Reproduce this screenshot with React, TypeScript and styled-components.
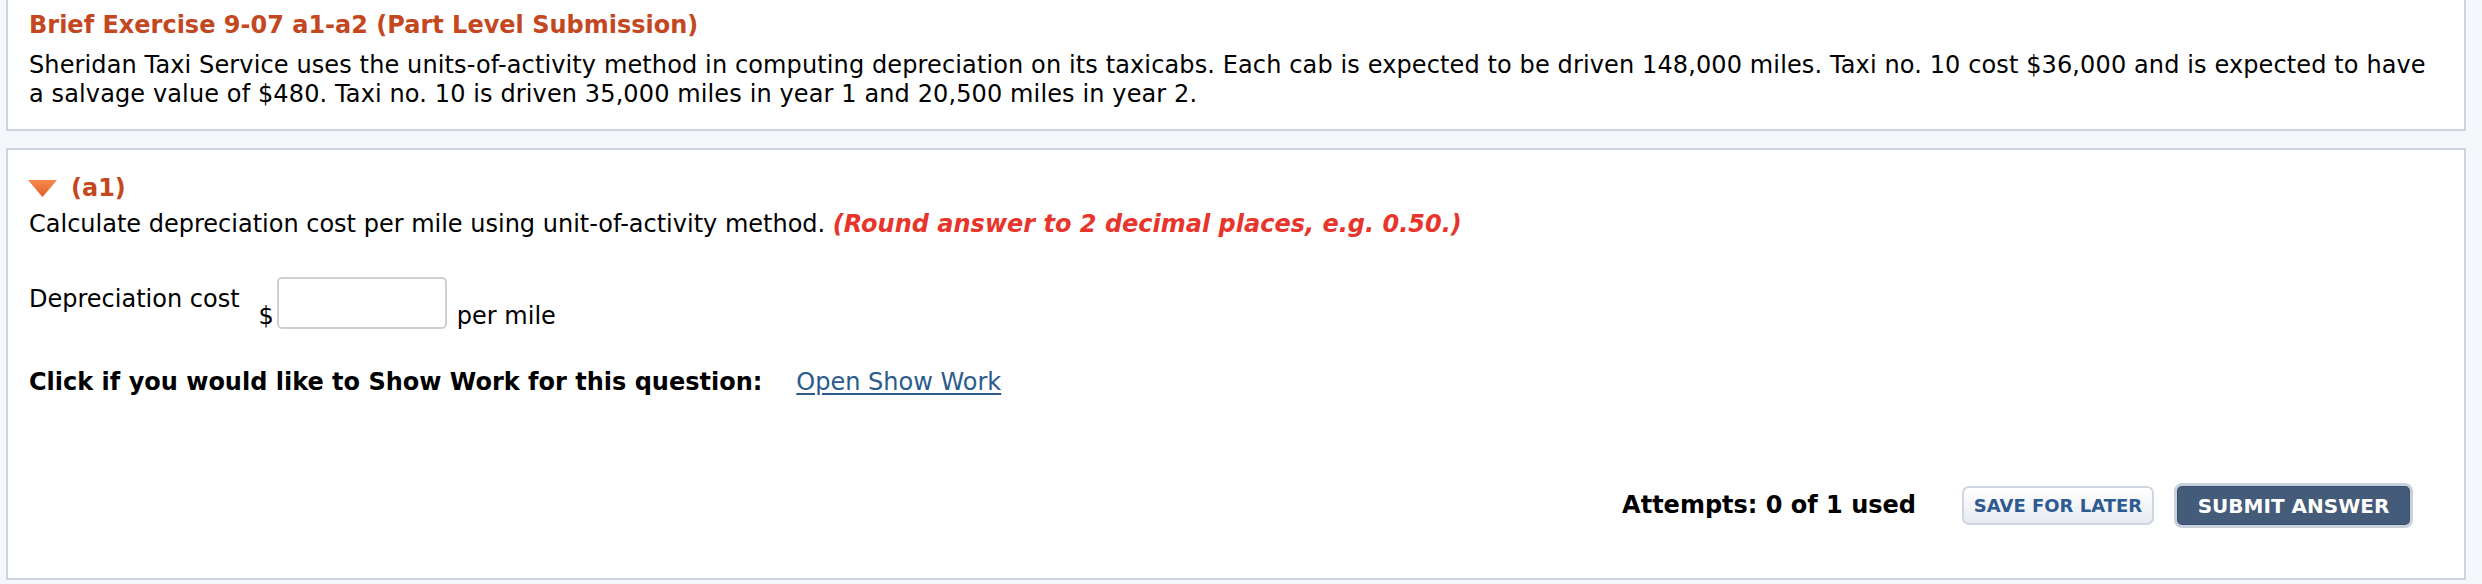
import React from "react";
import styled, { createGlobalStyle } from "styled-components";

const GlobalStyle = createGlobalStyle`
  html, body {
    margin: 0;
    padding: 0;
    background: #f5f7fa;
  }
  body {
    font-family: Verdana, "DejaVu Sans", sans-serif;
    font-size: 24px;
    line-height: 29px;
    color: #000;
  }
  * { box-sizing: border-box; }
`;

const Page = styled.div`
  display: flex;
  flex-direction: column;
  gap: 17px;
  margin-top: -2px;
  padding: 0 16px 0 6px;
`;

const Panel = styled.section<{ $pt: number; $pb: number }>`
  background: #ffffff;
  border: 2px solid #ccd4df;
  padding: ${(p) => p.$pt}px 21px ${(p) => p.$pb}px 21px;
  display: flex;
  flex-direction: column;
`;

const Title = styled.h1`
  margin: 0;
  font-size: 24px;
  line-height: 29px;
  font-weight: bold;
  color: #c4481f;
`;

const Paragraph = styled.p<{ $mt?: number; $spacing?: number; $mr?: number }>`
  margin: ${(p) => p.$mt ?? 0}px ${(p) => p.$mr ?? 0}px 0 0;
  letter-spacing: ${(p) => p.$spacing ?? 0}px;
`;

const PartHeader = styled.div`
  display: flex;
  align-items: center;
  gap: 14px;
  font-weight: bold;
  color: #c4481f;
  margin-left: -1px;
`;

const Note = styled.span`
  color: #e8352b;
  font-weight: bold;
  font-style: italic;
`;

const AnswerRow = styled.div`
  display: flex;
  align-items: flex-start;
  margin-top: 38px;
`;

const Label = styled.span`
  margin-top: 8px;
  margin-right: 19px;
`;

const InputGroup = styled.div`
  display: flex;
  align-items: flex-end;
`;

const Unit = styled.span<{ $ml?: number; $mr?: number }>`
  margin-left: ${(p) => p.$ml ?? 0}px;
  margin-right: ${(p) => p.$mr ?? 0}px;
  margin-bottom: -2px;
`;

const AmountInput = styled.input`
  width: 170px;
  height: 52px;
  border: 2px solid #cfcfcf;
  border-radius: 5px;
  background: #fff;
  font: inherit;
  padding: 0 8px;
  outline: none;
`;

const ShowWorkRow = styled.div`
  display: flex;
  align-items: baseline;
  gap: 34px;
  margin-top: 39px;
  font-weight: bold;
`;

const Link = styled.a`
  color: #2b5b8c;
  font-weight: normal;
  text-decoration: underline;
  text-underline-offset: 3px;
  cursor: pointer;
`;

const ButtonRow = styled.div`
  display: flex;
  justify-content: flex-end;
  align-items: center;
  margin-top: 86px;
  padding-right: 30px;
  height: 45px;
`;

const Attempts = styled.span`
  font-weight: bold;
  margin-right: 46px;
`;

const SaveButton = styled.button`
  width: 192px;
  height: 39px;
  border: 2px solid #cfd6e0;
  border-radius: 7px;
  background: linear-gradient(#ffffff, #e7ebf1);
  color: #2d5a91;
  font-family: Verdana, "DejaVu Sans", sans-serif;
  font-size: 18px;
  font-weight: bold;
  text-transform: uppercase;
  padding: 0;
  margin-right: 20px;
  cursor: pointer;
`;

const SubmitButton = styled.button`
  width: 239px;
  height: 45px;
  border: 3px solid #c9d1dc;
  border-radius: 8px;
  background: #455b7a;
  color: #ffffff;
  font-family: Verdana, "DejaVu Sans", sans-serif;
  font-size: 20px;
  font-weight: bold;
  text-transform: uppercase;
  padding: 0;
  box-shadow: inset 0 0 0 1px #3c5070;
  cursor: pointer;
`;

const Triangle = () => (
  <svg width="29" height="17" viewBox="0 0 29 17">
    <defs>
      <linearGradient id="tri" x1="0" y1="0" x2="0" y2="1">
        <stop offset="0" stopColor="#f48a50" />
        <stop offset="1" stopColor="#e45d24" />
      </linearGradient>
    </defs>
    <polygon points="0,0 29,0 14.5,17" fill="url(#tri)" />
  </svg>
);

export default function App() {
  return (
    <>
      <GlobalStyle />
      <Page>
        <Panel $pt={11} $pb={20}>
          <Title>Brief Exercise 9-07 a1-a2 (Part Level Submission)</Title>
          <Paragraph $mt={11} $spacing={0.12} $mr={10}>
            Sheridan Taxi Service uses the units-of-activity method in computing depreciation on its taxicabs.
            Each cab is expected to be driven 148,000 miles. Taxi no. 10 cost $36,000 and is expected to have a
            salvage value of $480. Taxi no. 10 is driven 35,000 miles in year 1 and 20,500 miles in year 2.
          </Paragraph>
        </Panel>
        <Panel $pt={24} $pb={50}>
          <PartHeader>
            <Triangle />
            <span>(a1)</span>
          </PartHeader>
          <Paragraph $mt={7}>
            Calculate depreciation cost per mile using unit-of-activity method.{" "}
            <Note>(Round answer to 2 decimal places, e.g. 0.50.)</Note>
          </Paragraph>
          <AnswerRow>
            <Label>Depreciation cost</Label>
            <InputGroup>
              <Unit $mr={3}>$</Unit>
              <AmountInput type="text" />
              <Unit $ml={10}>per mile</Unit>
            </InputGroup>
          </AnswerRow>
          <ShowWorkRow>
            <span>Click if you would like to Show Work for this question:</span>
            <Link>Open Show Work</Link>
          </ShowWorkRow>
          <ButtonRow>
            <Attempts>Attempts: 0 of 1 used</Attempts>
            <SaveButton>Save for Later</SaveButton>
            <SubmitButton>Submit Answer</SubmitButton>
          </ButtonRow>
        </Panel>
      </Page>
    </>
  );
}
